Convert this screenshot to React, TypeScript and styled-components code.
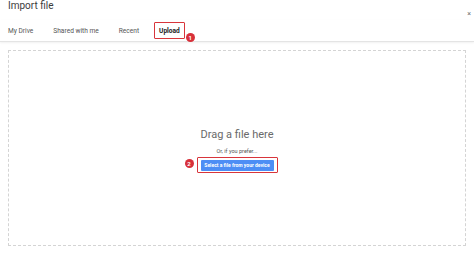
import React from 'react';
import styled, { createGlobalStyle } from 'styled-components';

const GlobalStyle = createGlobalStyle`
	html, body {
		margin: 0;
		padding: 0;
		background: #fff;
	}
	body {
		font-family: Roboto, 'Liberation Sans', Arial, sans-serif;
	}
`;

const tabs = ['My Drive', 'Shared with me', 'Recent', 'Upload'];

const App = () => {
	return (
		<Dialog>
			<GlobalStyle />
			<Header>
				<Title>Import file</Title>
				<Close>×</Close>
			</Header>
			<TabBar>
				{tabs.map(tab => (
					<Tab key={tab} active={tab === 'Upload'}>
						{tab}
						{tab === 'Upload' && <Badge style={{ right: -11, bottom: -4 }}>1</Badge>}
					</Tab>
				))}
			</TabBar>
			<Body>
				<DropZone>
					<DragText>Drag a file here</DragText>
					<Prefer>Or, if you prefer...</Prefer>
					<Highlight>
						<SelectButton>Select a file from your device</SelectButton>
						<Badge style={{ left: -13, top: 1 }}>2</Badge>
					</Highlight>
				</DropZone>
			</Body>
		</Dialog>
	);
};

const Dialog = styled.div`
	width: 474px;
	height: 257px;
	display: flex;
	flex-direction: column;
	overflow: hidden;
	background: #fff;
`;

const Header = styled.div`
	display: flex;
	justify-content: space-between;
	padding: 0 3px 0 8px;
	height: 20px;
`;

const Title = styled.div`
	font-size: 10px;
	line-height: 14px;
	color: #3c3c3c;
	margin-top: -1px;
`;

const Close = styled.div`
	font-size: 7px;
	line-height: 8px;
	color: #6f6f6f;
	margin-top: 10px;
`;

const TabBar = styled.div`
	display: flex;
	align-items: stretch;
	height: 21px;
	padding-left: 3px;
	border-bottom: 1px solid #e4e4e4;
	box-shadow: 0 1px 2px rgba(0, 0, 0, 0.06);
`;

const Tab = styled.div<{ active?: boolean }>`
	position: relative;
	display: flex;
	align-items: center;
	padding: 0 ${p => (p.active ? '4px' : '10px')} 0 ${p => (p.active ? '4px' : '5px')};
	margin: ${p => (p.active ? '2px 0 2px 0' : '0 5px 0 0')};
	font-size: 6.6px;
	color: ${p => (p.active ? '#222' : '#555')};
	font-weight: ${p => (p.active ? 700 : 400)};
	border: ${p => (p.active ? '1.5px solid #d8353b' : 'none')};
	border-radius: 1px;
`;

const Badge = styled.span`
	position: absolute;
	width: 9px;
	height: 9px;
	border-radius: 50%;
	background: #d7303a;
	color: #fff;
	font-size: 6px;
	font-weight: 700;
	line-height: 9px;
	text-align: center;
`;

const Body = styled.div`
	flex: 1;
	padding: 8px 8px 11px 8px;
	display: flex;
`;

const DropZone = styled.div`
	flex: 1;
	border: 1.5px dashed #d4d4d4;
	display: flex;
	flex-direction: column;
	align-items: center;
	justify-content: center;
	padding-top: 5px;
`;

const DragText = styled.div`
	font-size: 11px;
	line-height: 14px;
	color: #6a6a6a;
`;

const Prefer = styled.div`
	font-size: 5.5px;
	line-height: 7px;
	color: #555;
	margin-top: 6px;
`;

const Highlight = styled.div`
	position: relative;
	margin-top: 2px;
	padding: 1.5px 3px;
	border: 1.5px solid #d8353b;
	border-radius: 1px;
	display: flex;
`;

const SelectButton = styled.button`
	background: #4d8ef5;
	color: #fff;
	border: none;
	border-radius: 1px;
	font-family: inherit;
	font-size: 5px;
	font-weight: 700;
	height: 11px;
	width: 73px;
	padding: 0;
	cursor: pointer;
`;

export default App;
